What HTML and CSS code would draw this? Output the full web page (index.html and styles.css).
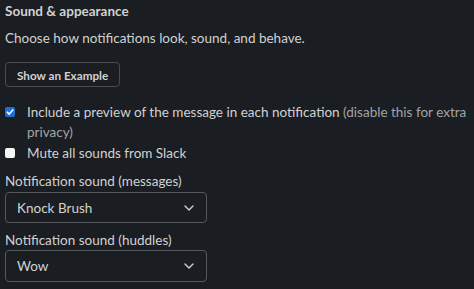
FILE: index.html
```html
<!DOCTYPE html>
<html>
<head>
<meta charset="utf-8">
<link rel="stylesheet" href="styles.css">
</head>
<body>
<div class="panel">
  <div class="heading">Sound &amp; appearance</div>
  <div class="desc">Choose how notifications look, sound, and behave.</div>
  <button class="btn">Show an Example</button>
  <label class="check-row">
    <span class="box checked">
      <svg viewBox="0 0 10 10" width="10" height="10"><path d="M2.3 5.2 L4.2 7.1 L7.8 2.9" fill="none" stroke="#fff" stroke-width="1.6" stroke-linecap="round" stroke-linejoin="round"/></svg>
    </span>
    <span class="check-text">Include a preview of the message in each notification <span class="muted">(disable this for extra privacy)</span></span>
  </label>
  <label class="check-row mute">
    <span class="box"></span>
    <span class="check-text">Mute all sounds from Slack</span>
  </label>
  <div class="field">
    <div class="label">Notification sound (messages)</div>
    <div class="select">
      <span>Knock Brush</span>
      <svg class="chev" viewBox="0 0 10 6" width="10" height="6"><path d="M1 1 L5 5 L9 1" fill="none" stroke="#d1d2d3" stroke-width="1.4" stroke-linecap="round" stroke-linejoin="round"/></svg>
    </div>
  </div>
  <div class="field second">
    <div class="label">Notification sound (huddles)</div>
    <div class="select tall">
      <span>Wow</span>
      <svg class="chev" viewBox="0 0 10 6" width="10" height="6"><path d="M1 1 L5 5 L9 1" fill="none" stroke="#d1d2d3" stroke-width="1.4" stroke-linecap="round" stroke-linejoin="round"/></svg>
    </div>
  </div>
</div>
</body>
</html>
```

FILE: styles.css
```css
html, body {
  margin: 0;
  padding: 0;
  background: #1a1d21;
}
body {
  font-family: Lato, "Noto Sans", sans-serif;
  color: #d1d2d3;
  font-size: 13.5px;
  line-height: 20px;
}
.panel {
  padding: 1px 5px 0;
  display: flex;
  flex-direction: column;
  align-items: flex-start;
}
.heading {
  font-weight: 700;
  line-height: 20px;
}
.desc {
  margin-top: 7px;
  line-height: 20px;
}
.btn {
  margin-top: 14px;
  height: 25px;
  padding: 0 11px;
  background: transparent;
  border: 1px solid #4a4c50;
  border-radius: 4px;
  color: #d1d2d3;
  font-family: Lato, "Noto Sans", sans-serif;
  font-weight: 700;
  font-size: 11.7px;
  line-height: 20px;
}
.check-row {
  margin-top: 15px;
  display: flex;
  align-items: flex-start;
  gap: 12px;
}
.check-row.mute {
  margin-top: 1px;
}
.box {
  flex: none;
  width: 10px;
  height: 10px;
  margin-top: 5px;
  background: #f5f5f5;
  border-radius: 2px;
  display: flex;
}
.box.checked {
  background: #1d6fd6;
}
.muted {
  color: #a3a4a6;
}
.field {
  margin-top: 8px;
  display: flex;
  flex-direction: column;
  align-items: flex-start;
}
.field.second {
  margin-top: 7px;
}
.label {
  line-height: 20px;
}
.select {
  margin-top: 1px;
  box-sizing: border-box;
  width: 202px;
  height: 31px;
  border: 1px solid #55575b;
  border-radius: 4px;
  background: #1a1d21;
  display: flex;
  align-items: center;
  justify-content: space-between;
  padding: 0 12px 0 11px;
}
.select.tall {
  margin-top: 0;
  height: 32px;
}
.chev {
  display: block;
}
```
